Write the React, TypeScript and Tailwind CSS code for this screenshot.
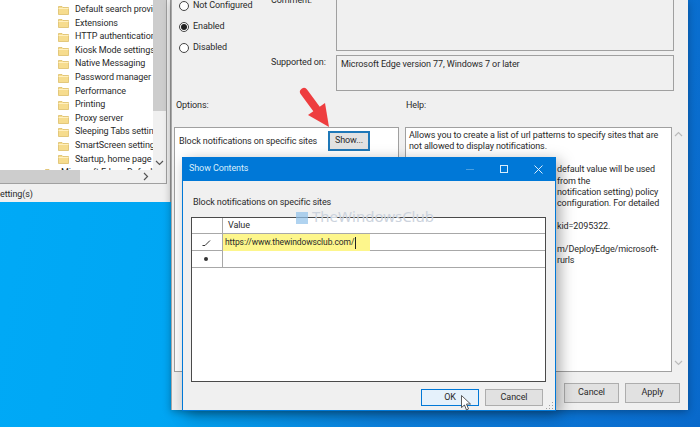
const folders = [
  'Default search provider',
  'Extensions',
  'HTTP authentication',
  'Kiosk Mode settings',
  'Native Messaging',
  'Password manager',
  'Performance',
  'Printing',
  'Proxy server',
  'Sleeping Tabs settings',
  'SmartScreen settings',
  'Startup, home page',
]

const helpLines = [
  'default value will be used',
  'from the',
  'notification setting) policy',
  'configuration. For detailed',
  '',
  'kid=2095322.',
  '',
  'm/DeployEdge/microsoft-',
  'rurls',
]

function Folder() {
  return (
    <svg width="11" height="10" viewBox="0 0 11 10" className="shrink-0">
      <path d="M0.5 1.5h3.5l1 1h5.5v7h-10z" fill="#f6dc8e" stroke="#d9b85c" strokeWidth="0.7" />
      <path d="M0.5 3.5h10" stroke="#fff0c0" strokeWidth="1" />
    </svg>
  )
}

function Radio({ label, checked }: { label: string; checked?: boolean }) {
  return (
    <div className="flex items-center gap-[4px] h-[21px]">
      <div className="w-[10px] h-[10px] rounded-full border border-[#444] bg-white flex items-center justify-center">
        {checked && <div className="w-[6px] h-[6px] rounded-full bg-[#222]" />}
      </div>
      <span>{label}</span>
    </div>
  )
}

function DialogButton({ label, className }: { label: string; className: string }) {
  return (
    <div className={`flex items-center justify-center border ${className}`}>{label}</div>
  )
}

function TreeWindow() {
  return (
    <div className="absolute left-0 top-0 w-[171px] h-[202px] bg-[#f0f0f0] border-r border-[#9a9a9a] flex flex-col">
      <div className="relative h-[184px] w-[167px] bg-white border-r border-b border-[#a0a0a0] overflow-hidden">
        <div className="w-[153px] pt-[3px] overflow-hidden">
          {folders.map((name) => (
            <div key={name} className="flex items-center gap-[6px] h-[13.6px] pl-[58px] whitespace-nowrap">
              <Folder />
              <span>{name}</span>
            </div>
          ))}
          <div className="flex items-center gap-[5px] h-[13.6px] pl-[45px] whitespace-nowrap">
            <Folder />
            <span>Microsoft Edge - Default</span>
          </div>
        </div>
        <div className="absolute right-0 top-0 w-[13px] h-[170px] bg-[#f0f0f0]">
          <div className="h-[111px] bg-[#cdcdcd]" />
          <svg width="9" height="6" viewBox="0 0 9 6" className="absolute left-[2px] top-[160px]">
            <path d="M1 1l3.5 3.5L8 1" fill="none" stroke="#555" strokeWidth="1.2" />
          </svg>
        </div>
        <div className="absolute left-0 bottom-0 w-full h-[13px] bg-[#f0f0f0]">
          <div className="w-[80px] h-full bg-[#cdcdcd]" />
          <svg width="6" height="9" viewBox="0 0 6 9" className="absolute left-[143px] top-[2px]">
            <path d="M1 1l3.5 3.5L1 8" fill="none" stroke="#555" strokeWidth="1.2" />
          </svg>
        </div>
      </div>
      <div className="h-[18px] pt-[3px] flex items-center whitespace-nowrap">etting(s)</div>
    </div>
  )
}

function PolicyDialog() {
  return (
    <div className="absolute left-[171px] top-0 w-[517px] h-[410px] bg-[#f0f0f0] border-l border-[#a8a8a8] shadow-[0_2px_8px_rgba(0,0,0,0.3)] flex flex-col pl-[2px] whitespace-nowrap">
      <div className="flex h-[94px]">
        <div className="w-[97px] pl-[5px] -mt-[5px]">
          <Radio label="Not Configured" />
          <Radio label="Enabled" checked />
          <Radio label="Disabled" />
        </div>
        <div className="flex flex-col">
          <div className="flex h-[50px]">
            <div className="w-[65px] -mt-[6px]">Comment:</div>
            <div className="w-[338px] h-[51px] border border-[#a0a0a0] border-t-0 bg-[#f0f0f0]" />
          </div>
          <div className="flex mt-[5px]">
            <div className="w-[65px] pt-[1px]">Supported on:</div>
            <div className="w-[338px] h-[36px] border border-[#a0a0a0] pl-[4px] pt-[2px]">
              Microsoft Edge version 77, Windows 7 or later
            </div>
          </div>
        </div>
      </div>
      <div className="flex h-[33px] pt-[5px] pl-[2px]">
        <div className="w-[230px]">Options:</div>
        <div>Help:</div>
      </div>
      <div className="flex h-[245px]">
        <div className="w-[225px] h-[245px] border border-[#a0a0a0] bg-white flex items-start justify-between pl-[4px] pr-[28px] pt-[3px]">
          <span className="pt-[4px]">Block notifications on specific sites</span>
          <div className="w-[42px] h-[20px] shrink-0 border-2 border-[#1f78b8] bg-[#e2e2e2] flex items-center justify-center">
            Show...
          </div>
        </div>
        <div className="ml-[6px] w-[267px] h-[245px] border border-[#a0a0a0] bg-white pl-[3px] pt-[2px] leading-[11.4px]">
          <div className="h-[11.4px]">Allows you to create a list of url patterns to specify sites that are</div>
          <div className="h-[11.4px]">not allowed to display notifications.</div>
          <div className="h-[11.4px]" />
          {helpLines.map((line, i) => (
            <div key={i} className="h-[11.4px] pl-[148px]">{line}</div>
          ))}
        </div>
        <div className="relative w-[16px]">
          <svg width="9" height="6" viewBox="0 0 9 6" className="absolute left-[2px] top-[4px]">
            <path d="M1 5l3.5-3.5L8 5" fill="none" stroke="#bbb" strokeWidth="1.2" />
          </svg>
          <svg width="9" height="6" viewBox="0 0 9 6" className="absolute left-[2px] top-[233px]">
            <path d="M1 1l3.5 3.5L8 1" fill="none" stroke="#bbb" strokeWidth="1.2" />
          </svg>
        </div>
      </div>
      <div className="flex justify-end gap-[6px] pt-[11px] pr-[8px]">
        <DialogButton label="Cancel" className="w-[55px] h-[20px] bg-[#e1e1e1] border-[#adadad]" />
        <DialogButton label="Apply" className="w-[55px] h-[20px] bg-[#e1e1e1] border-[#adadad]" />
      </div>
    </div>
  )
}

function ShowContents() {
  return (
    <div className="absolute left-[182px] top-[157px] w-[374px] h-[254px] bg-[#f0f0f0] border-x border-b border-[#0078d7] shadow-[4px_4px_14px_rgba(0,0,0,0.35)] flex flex-col">
      <div className="h-[24px] bg-[#0078d7] flex items-center justify-between pl-[6px] text-[#d9edfb]">
        <span>Show Contents</span>
        <div className="flex items-center">
          <div className="w-[34px] flex justify-center">
            <div className="w-[8px] h-px bg-[#4a9fe0]" />
          </div>
          <div className="w-[34px] flex justify-center">
            <div className="w-[8px] h-[8px] border border-[#d9edfb]" />
          </div>
          <div className="w-[34px] flex justify-center">
            <svg width="9" height="9" viewBox="0 0 9 9">
              <path d="M0.5 0.5l8 8M8.5 0.5l-8 8" stroke="#d9edfb" strokeWidth="1" />
            </svg>
          </div>
        </div>
      </div>
      <div className="relative flex-1 pl-[8px] pr-[9px] flex flex-col">
        <div className="h-[36px] pl-[2px] pt-[15px] leading-[12px] whitespace-nowrap">Block notifications on specific sites</div>
        <div className="h-[165px] border border-[#4a4a4a] bg-white">
          <div className="grid grid-cols-[31px_1fr] border-b border-[#a8a8a8] h-[16px]">
            <div className="border-r border-[#a8a8a8]" />
            <div className="pl-[5px] leading-[14px]">Value</div>
          </div>
          <div className="grid grid-cols-[31px_1fr] border-b border-[#a8a8a8] h-[17px]">
            <div className="border-r border-[#a8a8a8] flex items-center justify-center pr-[2px]">
              <svg width="9" height="7" viewBox="0 0 9 7">
                <path d="M0.5 6.5h2.5L8 1.5" fill="none" stroke="#333" strokeWidth="1" />
              </svg>
            </div>
            <div className="flex items-center whitespace-nowrap">
              <div className="w-[147px] h-[17px] pl-[2px] bg-[#fdf68c] flex items-center text-[8.5px]">
                https://www.thewindowsclub.com/
                <span className="ml-[1px] w-px h-[12px] bg-[#222]" />
              </div>
            </div>
          </div>
          <div className="grid grid-cols-[31px_1fr] border-b border-[#a8a8a8] h-[17px]">
            <div className="border-r border-[#a8a8a8] flex items-center justify-center pr-[2px]">
              <div className="w-[4px] h-[4px] rounded-full bg-[#333]" />
            </div>
            <div />
          </div>
        </div>
        <div className="flex justify-end gap-[6px] pt-[7px] pr-[3px]">
          <DialogButton label="OK" className="w-[58px] h-[17px] bg-[#e5f1fb] border-[#0078d7]" />
          <DialogButton label="Cancel" className="w-[58px] h-[17px] bg-[#e1e1e1] border-[#adadad]" />
        </div>
        <svg width="8" height="8" viewBox="0 0 8 8" className="absolute right-[1px] bottom-[1px]">
          <path d="M6 1h1v1H6zM3 4h1v1H3zM6 4h1v1H6zM0 7h1v1H0zM3 7h1v1H3zM6 7h1v1H6z" fill="#a0a0a0" />
        </svg>
        {/* watermark */}
        <div className="absolute left-[113px] top-[27px] flex items-center gap-[4px] pointer-events-none text-[15px] tracking-normal text-[#ccd3dd] whitespace-nowrap font-['Noto_Sans',sans-serif]">
          <div className="w-[12px] h-[12px] bg-[#8fc0ea] opacity-70" />
          <span className="-mt-[3px]">TheWindowsClub</span>
        </div>
      </div>
    </div>
  )
}

export default function App() {
  return (
    <div className="relative w-[700px] h-[427px] overflow-hidden bg-[linear-gradient(100deg,#00aaf7_0%,#00a6f3_30%,#0c7fdc_60%,#0969cb_100%)] font-['Roboto',sans-serif] text-[9px] tracking-[-0.1px] text-[#2a2a2a]">
      <TreeWindow />
      <PolicyDialog />
      <ShowContents />
      {/* red arrow */}
      <svg width="40" height="46" viewBox="0 0 40 46" className="absolute left-[297px] top-[87px]">
        <path d="M7 5L21 24" stroke="#ee3d3f" strokeWidth="8" strokeLinecap="round" />
        <path d="M11 28L28 16L32 40z" fill="#ee3d3f" />
      </svg>
      {/* cursor */}
      <svg width="11" height="17" viewBox="0 0 11 17" className="absolute left-[461px] top-[395px]">
        <path d="M0.5 0.5v12l3-2.5 2 5 2-1-2-5h4z" fill="#fff" stroke="#333" strokeWidth="0.8" />
      </svg>
    </div>
  )
}
